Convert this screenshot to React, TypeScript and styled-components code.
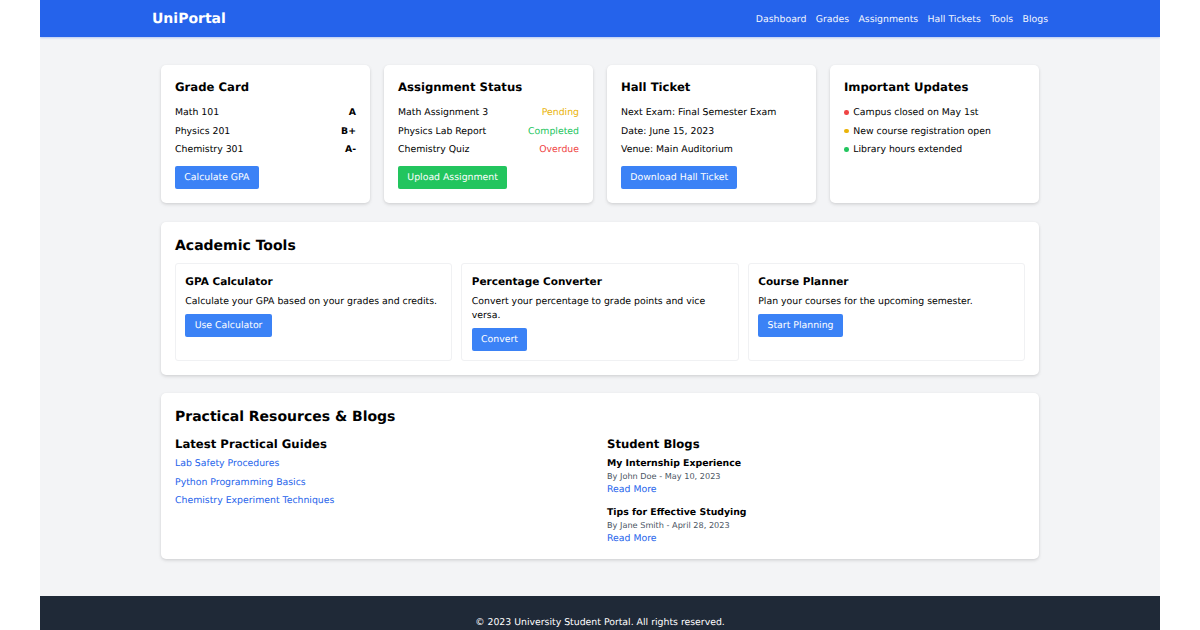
import React from 'react';
import styled, { createGlobalStyle } from 'styled-components';

const GlobalStyle = createGlobalStyle`
  html, body {
    margin: 0;
    height: 630px;
    overflow: hidden;
    background: #fff;
  }
  * { box-sizing: border-box; }
  body {
    font-family: "DejaVu Sans", sans-serif;
    font-size: 9.33px;
    color: #000;
    text-rendering: geometricPrecision;
  }
`;

const Page = styled.div`
  width: 1120px;
  height: 630px;
  margin: 0 auto;
  background: #f3f4f6;
  display: flex;
  flex-direction: column;
  overflow: hidden;
`;

const Header = styled.header`
  height: 37px;
  flex: none;
  background: #2563eb;
  color: #fff;
  padding: 0 112px;
  display: flex;
  align-items: center;
  justify-content: space-between;
  box-shadow: 0 1px 2px rgba(37, 99, 235, 0.3);
`;

const Logo = styled.div`
  font-size: 14px;
  font-weight: 700;
`;

const Nav = styled.nav`
  display: flex;
  gap: 9.33px;
  padding-top: 1px;
`;

const NavLink = styled.a`
  font-size: 9.33px;
  color: #fff;
  opacity: 0.95;
`;

const Main = styled.main`
  width: 878px;
  margin: 0 auto;
  padding-top: 28px;
  flex: 1;
`;

const CardGrid = styled.div`
  display: grid;
  grid-template-columns: repeat(4, 1fr);
  gap: 14px;
  margin-bottom: 19px;
`;

const Panel = styled.section`
  background: #fff;
  border-radius: 5px;
  padding: 14px;
  box-shadow: 0 1px 3px rgba(0, 0, 0, 0.1), 0 2px 4px rgba(0, 0, 0, 0.06);
`;

const Card = styled(Panel)`
  height: 138px;
`;

const WidePanel = styled(Panel)`
  margin-bottom: 18px;
`;

const CardTitle = styled.h3`
  margin: 0 0 9.5px;
  font-size: 11.67px;
  line-height: 17.5px;
  font-weight: 700;
`;

const Row = styled.div`
  display: flex;
  justify-content: space-between;
  height: 14px;
  line-height: 14px;
  margin-bottom: 4.5px;
`;

const Grade = styled.span`
  font-weight: 700;
`;

const Status = styled.span<{ $color: string }>`
  color: ${p => p.$color};
`;

const Button = styled.button<{ $color?: string }>`
  display: block;
  height: 23.33px;
  padding: 0 9.33px;
  border: none;
  border-radius: 2px;
  background: ${p => p.$color || '#3b82f6'};
  color: #fff;
  font-family: inherit;
  font-size: 9.33px;
  text-rendering: geometricPrecision;
`;

const CardButton = styled(Button)`
  margin-top: 9px;
`;

const UpdateRow = styled.div`
  display: flex;
  align-items: center;
  gap: 4.67px;
  height: 14px;
  line-height: 14px;
  margin-bottom: 4.5px;
`;

const Dot = styled.span<{ $color: string }>`
  width: 4.67px;
  height: 4.67px;
  margin-top: -1px;
  border-radius: 50%;
  background: ${p => p.$color};
`;

const SectionTitle = styled.h2`
  margin: 0 0 8px;
  padding-top: 1px;
  font-size: 14px;
  line-height: 18px;
  font-weight: 700;
`;

const ToolGrid = styled.div`
  display: grid;
  grid-template-columns: repeat(3, 1fr);
  gap: 9.33px;
`;

const ToolCard = styled.div`
  height: 98px;
  padding: 10px 9.33px;
  border: 1px solid #f0f1f3;
  border-radius: 3px;
`;

const ToolTitle = styled.h4`
  margin: 0 0 5px;
  font-size: 10.5px;
  line-height: 16px;
  font-weight: 700;
`;

const ToolText = styled.p`
  margin: 0 0 4.5px;
  line-height: 14px;
`;

const Columns = styled.div`
  display: grid;
  grid-template-columns: 1fr 1fr;
  gap: 14px;
  padding-bottom: 0.5px;
`;

const SubTitle = styled.h3`
  margin: 2px 0 5px;
  font-size: 11.67px;
  line-height: 16px;
  font-weight: 700;
`;

const GuideLink = styled.a`
  display: block;
  height: 14px;
  line-height: 14px;
  margin-bottom: 4.5px;
  font-size: 9.33px;
  color: #2563eb;
`;

const BlogPost = styled.article`
  margin-bottom: 10.5px;

  &:last-child {
    margin-bottom: 0;
  }
`;

const BlogTitle = styled.h4`
  margin: 0;
  font-size: 9.33px;
  line-height: 13px;
  font-weight: 700;
`;

const BlogMeta = styled.p`
  margin: 0;
  font-size: 8.17px;
  line-height: 12.5px;
  color: #4b5563;
`;

const ReadMore = styled.a`
  display: block;
  font-size: 9.33px;
  line-height: 13px;
  color: #2563eb;
`;

const Footer = styled.footer`
  height: 34px;
  flex: none;
  background: #1f2937;
  color: #fff;
  text-align: center;
  font-size: 9.33px;
  padding-top: 20px;
  line-height: 14px;
`;

const navItems = ['Dashboard', 'Grades', 'Assignments', 'Hall Tickets', 'Tools', 'Blogs'];

const grades = [
  ['Math 101', 'A'],
  ['Physics 201', 'B+'],
  ['Chemistry 301', 'A-'],
];

const assignments = [
  ['Math Assignment 3', 'Pending', '#eab308'],
  ['Physics Lab Report', 'Completed', '#22c55e'],
  ['Chemistry Quiz', 'Overdue', '#ef4444'],
];

const updates = [
  ['Campus closed on May 1st', '#ef4444'],
  ['New course registration open', '#eab308'],
  ['Library hours extended', '#22c55e'],
];

const tools = [
  ['GPA Calculator', 'Calculate your GPA based on your grades and credits.', 'Use Calculator'],
  ['Percentage Converter', 'Convert your percentage to grade points and vice versa.', 'Convert'],
  ['Course Planner', 'Plan your courses for the upcoming semester.', 'Start Planning'],
];

const guides = ['Lab Safety Procedures', 'Python Programming Basics', 'Chemistry Experiment Techniques'];

const posts = [
  ['My Internship Experience', 'By John Doe - May 10, 2023'],
  ['Tips for Effective Studying', 'By Jane Smith - April 28, 2023'],
];

export default function App() {
  return (
    <>
      <GlobalStyle />
      <Page>
        <Header>
          <Logo>UniPortal</Logo>
          <Nav>
            {navItems.map(item => (
              <NavLink key={item}>{item}</NavLink>
            ))}
          </Nav>
        </Header>

        <Main>
          <CardGrid>
            <Card>
              <CardTitle>Grade Card</CardTitle>
              {grades.map(([course, grade]) => (
                <Row key={course}>
                  <span>{course}</span>
                  <Grade>{grade}</Grade>
                </Row>
              ))}
              <CardButton>Calculate GPA</CardButton>
            </Card>
            <Card>
              <CardTitle>Assignment Status</CardTitle>
              {assignments.map(([name, status, color]) => (
                <Row key={name}>
                  <span>{name}</span>
                  <Status $color={color}>{status}</Status>
                </Row>
              ))}
              <CardButton $color="#22c55e">Upload Assignment</CardButton>
            </Card>
            <Card>
              <CardTitle>Hall Ticket</CardTitle>
              <Row>Next Exam: Final Semester Exam</Row>
              <Row>Date: June 15, 2023</Row>
              <Row>Venue: Main Auditorium</Row>
              <CardButton>Download Hall Ticket</CardButton>
            </Card>
            <Card>
              <CardTitle>Important Updates</CardTitle>
              {updates.map(([text, color]) => (
                <UpdateRow key={text}>
                  <Dot $color={color} />
                  <span>{text}</span>
                </UpdateRow>
              ))}
            </Card>
          </CardGrid>

          <WidePanel>
            <SectionTitle>Academic Tools</SectionTitle>
            <ToolGrid>
              {tools.map(([title, text, action]) => (
                <ToolCard key={title}>
                  <ToolTitle>{title}</ToolTitle>
                  <ToolText>{text}</ToolText>
                  <Button>{action}</Button>
                </ToolCard>
              ))}
            </ToolGrid>
          </WidePanel>

          <WidePanel>
            <SectionTitle>Practical Resources &amp; Blogs</SectionTitle>
            <Columns>
              <div>
                <SubTitle>Latest Practical Guides</SubTitle>
                {guides.map(guide => (
                  <GuideLink key={guide}>{guide}</GuideLink>
                ))}
              </div>
              <div>
                <SubTitle>Student Blogs</SubTitle>
                {posts.map(([title, meta]) => (
                  <BlogPost key={title}>
                    <BlogTitle>{title}</BlogTitle>
                    <BlogMeta>{meta}</BlogMeta>
                    <ReadMore>Read More</ReadMore>
                  </BlogPost>
                ))}
              </div>
            </Columns>
          </WidePanel>
        </Main>

        <Footer>© 2023 University Student Portal. All rights reserved.</Footer>
      </Page>
    </>
  );
}
